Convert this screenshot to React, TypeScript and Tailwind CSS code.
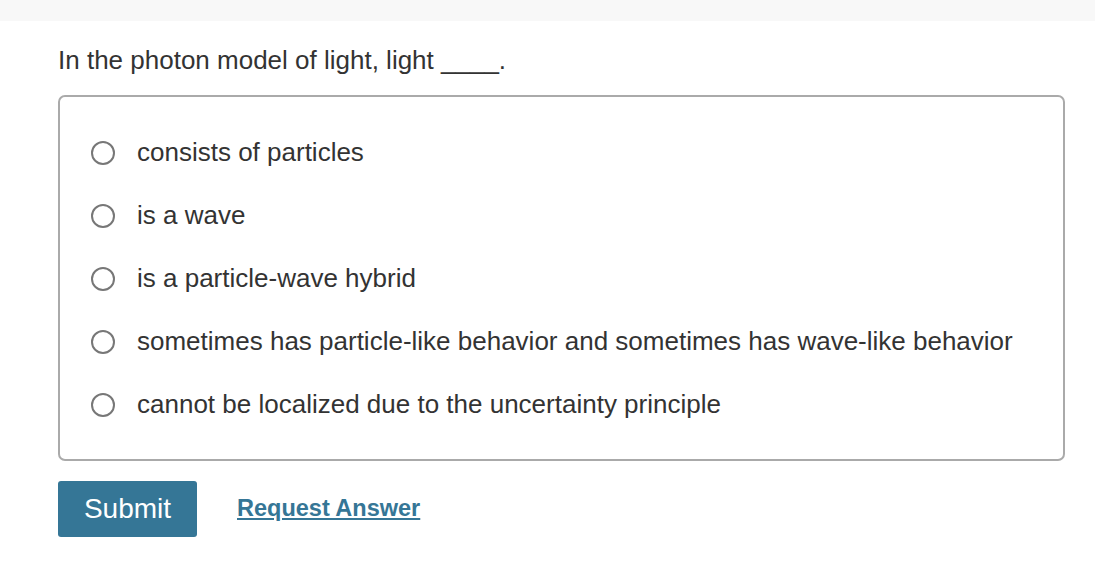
const options = [
  "consists of particles",
  "is a wave",
  "is a particle-wave hybrid",
  "sometimes has particle-like behavior and sometimes has wave-like behavior",
  "cannot be localized due to the uncertainty principle",
];

export default function App() {
  return (
    <div className="h-[573px] w-[1095px] bg-white font-['Liberation_Sans',Arial,sans-serif] text-[#333]">
      <div className="h-[21px] bg-[#f8f8f8]" />
      <div className="px-[58px] pt-[24px]">
        <p className="text-[26px] leading-[30px]">In the photon model of light, light ____.</p>
        <div className="mt-[20px] w-[1007px] rounded-[7px] border-2 border-[#aaaaaa] px-[31px] pb-[23px] pt-[24px]">
          {options.map((option) => (
            <label key={option} className="flex h-[63px] items-center gap-[22px]">
              <span className="h-[24px] w-[24px] shrink-0 rounded-full border-2 border-[#777]" />
              <span className="text-[26px]">{option}</span>
            </label>
          ))}
        </div>
        <div className="mt-[20px] flex items-center gap-[40px]">
          <button
            type="button"
            className="h-[56px] w-[139px] rounded-[3px] bg-[#357696] text-[28px] text-white"
          >
            Submit
          </button>
          <a href="#" className="text-[23.5px] font-bold text-[#357696] underline">
            Request Answer
          </a>
        </div>
      </div>
    </div>
  );
}
